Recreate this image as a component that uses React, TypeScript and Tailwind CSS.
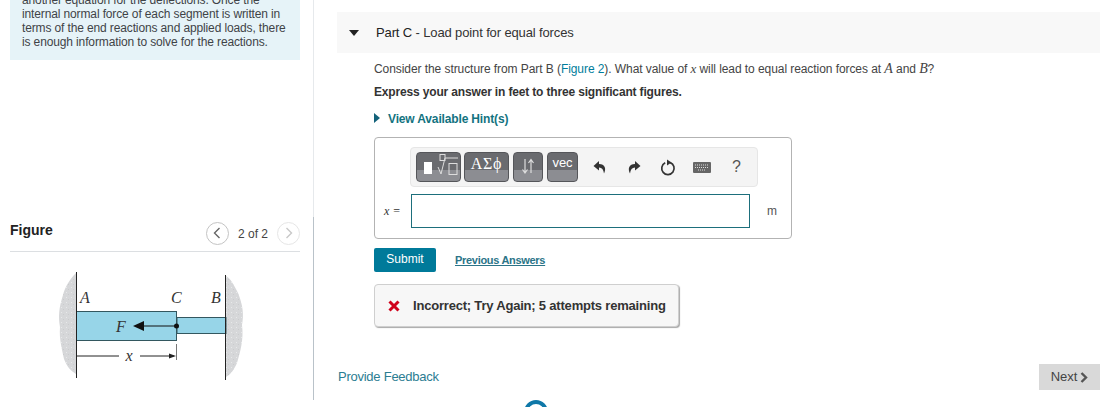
const teal = "text-[#007d9c]";

function Beam() {
  return (
    <svg width="200" height="120" viewBox="0 0 200 120" className="block">
      <defs>
        <pattern id="speck" width="5" height="5" patternUnits="userSpaceOnUse">
          <rect width="5" height="5" fill="#d6d7d9" />
          <rect x="1" y="2" width="1" height="1" fill="#e8e9ea" />
          <rect x="3" y="4" width="1" height="1" fill="#cacbcd" />
        </pattern>
      </defs>
      <path d="M26 8C20 14 15 22 13 30C9 42 8 52 10 62C9 74 12 84 14 94C17 102 21 106 26 109Z" fill="url(#speck)" />
      <path d="M176 11C181 14 184 20 188 28C193 40 194 50 192 60C194 74 190 88 187 98C184 105 180 110 176 112Z" fill="url(#speck)" />
      <rect x="26.5" y="46.5" width="100" height="29" fill="#97d5e8" stroke="#33575f" />
      <rect x="127" y="52.5" width="49" height="16" fill="#97d5e8" stroke="#33575f" />
      <path d="M26.5 7V113M175.5 10V115" stroke="#222" strokeWidth="1" />
      <path d="M126.5 79V95" stroke="#777" strokeWidth="1" />
      <path d="M27 91H69M90 91H124" stroke="#222" strokeWidth="1" />
      <path d="M126 91L119 88.5V93.5Z" fill="#222" />
      <path d="M92 61H126" stroke="#111" strokeWidth="1" />
      <path d="M83 61L94 56V66Z" fill="#111" />
      <circle cx="126.5" cy="61" r="2.5" fill="#111" />
      <g fontFamily="'Liberation Serif', serif" fontStyle="italic" fontSize="16" fill="#333">
        <text x="30" y="38">A</text>
        <text x="121" y="38">C</text>
        <text x="161" y="38">B</text>
        <text x="66" y="67">F</text>
        <text x="79" y="96" textAnchor="middle">x</text>
      </g>
    </svg>
  );
}

function PagerButton({ dir }: { dir: "left" | "right" }) {
  const off = dir === "right";
  return (
    <span className={`flex h-[23px] w-[23px] items-center justify-center rounded-full border ${off ? "border-[#e6e6e6]" : "border-[#c4c4c4]"}`}>
      <svg width="8" height="12" viewBox="0 0 8 12">
        <path d={off ? "M1.5 1L6.5 6L1.5 11" : "M6.5 1L1.5 6L6.5 11"} fill="none" stroke={off ? "#c8c8c8" : "#666"} strokeWidth="1.4" />
      </svg>
    </span>
  );
}

function ToolButton({ width, children }: { width: string; children: React.ReactNode }) {
  return (
    <span className={`flex h-[30px] ${width} items-start justify-center overflow-hidden rounded-[4px] border border-[#55565a] bg-[linear-gradient(#6a6b6f_0,#6a6b6f_60%,#8c8d92_60%,#8c8d92_100%)] text-white`}>
      {children}
    </span>
  );
}

function Toolbar() {
  return (
    <div className="flex h-[40px] w-[348px] items-center rounded-[4px] border border-[#e6e6e6] bg-[#f4f4f4] pl-[5px]">
      <div className="flex gap-[3px]">
        <ToolButton width="w-[45px]">
          <svg width="40" height="26" viewBox="0 0 40 26">
            <rect x="5" y="9" width="8" height="12" fill="#fff" />
            <rect x="21" y="1.5" width="5" height="6" fill="none" stroke="#ddd" />
            <path d="M19 14L22 21L26 5H39" fill="none" stroke="#ddd" />
            <rect x="30" y="10.5" width="8" height="11" fill="none" stroke="#ddd" />
          </svg>
        </ToolButton>
        <ToolButton width="w-[45px]">
          <span className="mt-[2px] font-['Liberation_Serif',serif] text-[16px] leading-[18px] tracking-[0.8px]">ΑΣϕ</span>
        </ToolButton>
        <ToolButton width="ml-px w-[30px]">
          <svg width="16" height="22" viewBox="0 0 16 22" className="mt-[3px]">
            <path d="M5 3V16M2.5 13.5L5 17L7.5 13.5M11 17V4M8.5 7L11 3.5L13.5 7" fill="none" stroke="#ddd" strokeWidth="1.2" />
          </svg>
        </ToolButton>
        <ToolButton width="ml-px w-[31px]">
          <span className="mt-[2px] font-['Liberation_Sans',sans-serif] text-[13px] leading-[15px]">vec</span>
        </ToolButton>
      </div>
      <div className="ml-[15px] flex items-center">
        <span className="flex w-[34px]">
          <svg width="14" height="14" viewBox="0 0 14 14">
            <path d="M6 1L0.5 6L6 10.5V7.5C9 7.5 10.5 9.5 11 13.5C13.5 8.5 12 4 6 4Z" fill="#333" />
          </svg>
        </span>
        <span className="flex w-[33px]">
          <svg width="14" height="14" viewBox="0 0 14 14">
            <path d="M8 1L13.5 6L8 10.5V7.5C5 7.5 3.5 9.5 3 13.5C0.5 8.5 2 4 8 4Z" fill="#333" />
          </svg>
        </span>
        <span className="flex w-[33px]">
          <svg width="16" height="17" viewBox="0 0 16 17">
            <path d="M10.2 3.6A6.2 6.2 0 1 1 5.2 3.8" fill="none" stroke="#333" strokeWidth="1.7" />
            <path d="M7 0.5L11.5 3.6L7 6.5Z" fill="#333" />
          </svg>
        </span>
        <span className="flex w-[39px]">
          <svg width="18" height="11" viewBox="0 0 18 11">
            <rect width="18" height="11" rx="1" fill="#666" />
            <path d="M2 3H16M2 5.5H16M5 8H13" stroke="#ddd" strokeWidth="1" strokeDasharray="1 1" />
          </svg>
        </span>
        <span className="font-['Liberation_Sans',sans-serif] text-[16px] leading-none text-[#555]">?</span>
      </div>
    </div>
  );
}

export default function App() {
  return (
    <div className="flex h-[407px] w-[1112px] overflow-hidden bg-white font-['Liberation_Sans',Arial,sans-serif] text-[#333]">
      <aside className="flex h-full w-[313px] shrink-0 flex-col pl-[10px] pr-[13px]">
        <div className="mt-[-7px] h-[67px] shrink-0 bg-[#e6f3f8] pl-[12px] pr-[10px] text-[12px] leading-[14px] tracking-[-0.13px] text-[#3f4347]">
          <p>another equation for the deflections. Once the internal normal force of each segment is written in terms of the end reactions and applied loads, there is enough information to solve for the reactions.</p>
        </div>
        <div className="mt-[157px] flex h-[35px] shrink-0 items-center justify-between border-b border-[#dcdfe2] pb-[2px]">
          <h2 className="mt-[-5px] text-[14px] font-bold text-[#222]">Figure</h2>
          <div className="flex items-center gap-[9px] text-[12px] text-[#444]">
            <PagerButton dir="left" />
            <span className="mt-[1px]">2 of 2</span>
            <PagerButton dir="right" />
          </div>
        </div>
        <div className="ml-[40px] mt-[13px]">
          <Beam />
        </div>
      </aside>

      <div className="flex h-full flex-col">
        <div className="h-[217px] w-px bg-[#e6e9ec]" />
        <div className="h-[183px] w-px bg-[#b9c2c9]" />
      </div>

      <main className="ml-[23px] flex w-[763px] flex-col">
        <div className="mt-[12px] flex h-[41px] shrink-0 items-center bg-[#f8f8f8] text-[13px] tracking-[-0.13px]">
          <svg width="10" height="6" viewBox="0 0 10 6" className="ml-[12px] mr-[17px]">
            <path d="M0 0H10L5 6Z" fill="#222" />
          </svg>
          <span>
            <span className="font-medium text-[#222]">Part C</span> - Load point for equal forces
          </span>
        </div>

        <div className="ml-[37px] mt-[9px] shrink-0 text-[12px] leading-[14px]">
          <p className="tracking-[-0.07px] text-[#444]">
            Consider the structure from Part B (<span className={teal}>Figure 2</span>). What value of <i className="font-['Liberation_Serif',serif] text-[13px]">x</i> will lead to equal reaction forces at <i className="font-['Liberation_Serif',serif] text-[14px]">A</i> and <i className="font-['Liberation_Serif',serif] text-[14px]">B</i>?
          </p>
          <p className="mt-[9px] font-bold tracking-[-0.16px] text-[#333]">Express your answer in feet to three significant figures.</p>
          <div className="mt-[13px] flex items-center font-bold tracking-[-0.15px] text-[#13737f]">
            <svg width="6" height="10" viewBox="0 0 6 10" className="mr-[8px] mt-[-3px]">
              <path d="M0 0L6 5L0 10Z" fill="#13627a" />
            </svg>
            View Available Hint(s)
          </div>

          <div className="mt-[11px] h-[102px] w-[418px] rounded-[4px] border border-[#b3b3b3] pl-[35px] pt-[9px]">
            <Toolbar />
            <div className="ml-[-35px] mt-[7px] flex items-center">
              <span className="w-[36px] pl-[9px] font-['Liberation_Serif',serif] text-[12px] tracking-[0.5px] whitespace-nowrap"><i>x</i> =</span>
              <div className="h-[34px] w-[339px] border border-[#1d6f7c] bg-white" />
              <span className="ml-[17px] text-[#555]">m</span>
            </div>
          </div>

          <div className="mt-[9px] flex items-center">
            <button className="h-[24px] w-[62px] rounded-[2px] bg-[#007a9a] pb-[3px] text-[12px] text-white">Submit</button>
            <a className="ml-[19px] text-[11px] font-bold tracking-[-0.3px] text-[#2b7488] underline">Previous Answers</a>
          </div>

          <div className="mt-[12px] flex h-[43px] w-[305px] items-center rounded-[4px] border border-[#cfcfcf] bg-[#f7f7f7] pl-[13px] shadow-[1px_1px_1px_#a8a8a8]">
            <svg width="12" height="12" viewBox="0 0 12 12" className="mr-[13px]">
              <path d="M1.5 1.5L10.5 10.5M10.5 1.5L1.5 10.5" stroke="#d0021b" strokeWidth="3" />
            </svg>
            <span className="text-[13px] font-bold tracking-[-0.2px] text-[#333]">Incorrect; Try Again; 5 attempts remaining</span>
          </div>
        </div>

        <div className="mt-[37px] flex shrink-0 items-center justify-between">
          <a className="ml-[1px] text-[13px] tracking-[-0.25px] text-[#2c7d92]">Provide Feedback</a>
          <button className="flex h-[26px] w-[61px] items-center justify-center gap-[3px] bg-[#d9d9d9] text-[13px] text-[#444]">
            Next
            <svg width="8" height="11" viewBox="0 0 8 11">
              <path d="M1.5 1L6 5.5L1.5 10" fill="none" stroke="#555" strokeWidth="2.4" />
            </svg>
          </button>
        </div>

        <div className="ml-[187px] mt-[10px] h-[24px] w-[24px] shrink-0 rounded-full border-[4px] border-[#0f78a8]" />
      </main>
    </div>
  );
}
